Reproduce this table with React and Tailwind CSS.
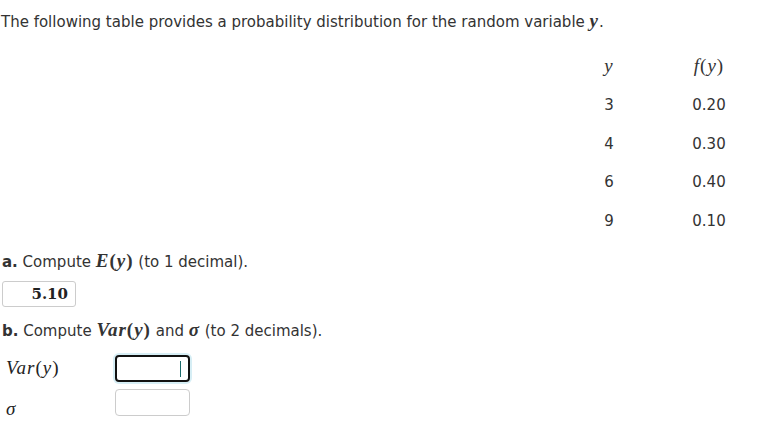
import React from 'react'

const rows = [
  ['3', '0.20'],
  ['4', '0.30'],
  ['6', '0.40'],
  ['9', '0.10'],
]

// math text, set in an italic serif like the rendered TeX
const M = ({ children, bold }) => (
  <span className={`font-['Liberation_Serif',serif] italic text-[19px] leading-none tracking-[1px] ${bold ? 'font-bold' : ''}`}>{children}</span>
)
const P = ({ children, bold }) => (
  <span className={`font-['Liberation_Serif',serif] text-[19px] leading-none tracking-[1px] ${bold ? 'font-bold' : ''}`}>{children}</span>
)

export default function App() {
  return (
    <div className="w-[777px] h-[429px] bg-white text-[#333] font-['DejaVu_Sans',Verdana,sans-serif] text-[15px] overflow-hidden">
      <p className="pl-[1px] pt-[11px] leading-[20px]">
        The following table provides a probability distribution for the random variable <M bold>y</M>.
      </p>

      {/* distribution table */}
      <div className="flex justify-end pr-[18px] mt-[14px]">
        <table className="text-center">
          <thead>
            <tr className="h-[40px]">
              <th className="w-[100px] font-normal leading-[20px]"><M>y</M></th>
              <th className="w-[100px] font-normal leading-[20px]"><M>f</M><P>(</P><M>y</M><P>)</P></th>
            </tr>
          </thead>
          <tbody>
            {rows.map(([y, f]) => (
              <tr key={y} className="h-[38.5px]">
                <td>{y}</td>
                <td>{f}</td>
              </tr>
            ))}
          </tbody>
        </table>
      </div>

      <div className="pl-[2px] mt-[11px]">
        <p className="leading-[20px]">
          <b>a.</b> Compute <M bold>E</M><P bold>(</P><M bold>y</M><P bold>)</P> (to 1 decimal).
        </p>
        <div className="mt-[9px] w-[74px] h-[26px] border border-[#ccc] rounded-[3px] flex items-center justify-end pr-[7px] font-['DejaVu_Serif',serif] font-bold text-[15px] text-[#222]">
          5.10
        </div>
        <p className="mt-[13px] leading-[20px]">
          <b>b.</b> Compute <M bold>Var</M><P bold>(</P><M bold>y</M><P bold>)</P> and <M bold>σ</M> (to 2 decimals).
        </p>
      </div>

      <div className="grid grid-cols-[115px_75px] gap-y-[7px] mt-[14px] items-center">
        <div className="pl-[6px] leading-[20px] text-[#222]"><M>Var</M><P>(</P><M>y</M><P>)</P></div>
        <div className="h-[27px] border-2 border-[#111] rounded-[4px] shadow-[0_0_0_2px_#d6eef5] flex items-center justify-end pr-[7px]">
          <div className="w-[1px] h-[16px] bg-[#1a6b6b]" />
        </div>
        <div className="pl-[6px] h-[27px] pt-[10px] leading-[20px] text-[#222]"><M>σ</M></div>
        <div className="h-[27px] border border-[#ccc] rounded-[4px]" />
      </div>
    </div>
  )
}
